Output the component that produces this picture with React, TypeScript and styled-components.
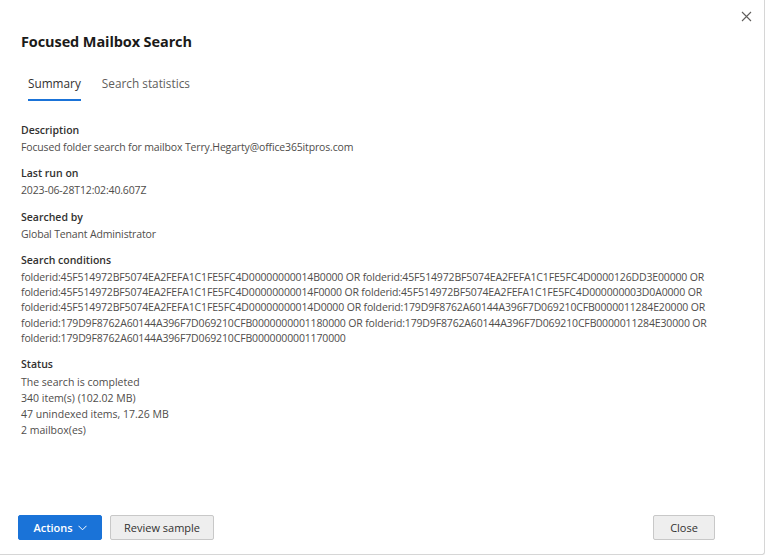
import React from "react";
import styled, { createGlobalStyle } from "styled-components";

const Global = createGlobalStyle`
  html, body { margin: 0; padding: 0; background: #ffffff; }
  body { font-family: "Open Sans", "Noto Sans", sans-serif; }
  * { box-sizing: border-box; }
`;

const Panel = styled.div`
  position: relative;
  width: 765px;
  height: 555px;
  background: #fff;
  border-right: 1px solid #d6d6d6;
  border-bottom: 1px solid #d6d6d6;
  border-bottom-right-radius: 3px;
  display: flex;
  flex-direction: column;
`;

const CloseX = styled.button`
  position: absolute;
  top: 6px;
  right: 8px;
  width: 20px;
  height: 20px;
  border: none;
  background: transparent;
  padding: 0;
  display: flex;
  align-items: center;
  justify-content: center;
  cursor: pointer;
`;

const Title = styled.h1`
  margin: 32px 0 0 21px;
  font-size: 14.5px;
  font-weight: 700;
  color: #1b1a19;
  line-height: 20px;
  letter-spacing: -0.1px;
`;

const TabBar = styled.div`
  display: flex;
  gap: 21px;
  margin: 17px 0 0 28px;
`;

const Tab = styled.div<{ $active?: boolean }>`
  font-size: 11.8px;
  color: ${(p) => (p.$active ? "#323130" : "#605e5c")};
  padding: 6px 0 7px;
  line-height: 17px;
  border-bottom: 2px solid ${(p) => (p.$active ? "#1a73d8" : "transparent")};
`;

const Content = styled.div`
  flex: 1;
  padding: 21px 21px 0;
  display: flex;
  flex-direction: column;
  gap: 10px;
`;

const Section = styled.div`
  display: flex;
  flex-direction: column;
`;

const Label = styled.div`
  font-size: 10.5px;
  font-weight: 600;
  color: #323130;
  line-height: 16px;
  margin-bottom: 2px;
`;

const Value = styled.div`
  font-size: 10.5px;
  color: #4f4d4b;
  line-height: 15.3px;
  letter-spacing: -0.15px;
`;

const StatusLine = styled.div`
  font-size: 10.5px;
  color: #4f4d4b;
  line-height: 16px;
`;

const Footer = styled.div`
  display: flex;
  align-items: center;
  padding: 0 49px 14px 18px;
  gap: 8px;
`;

const Spacer = styled.div`
  flex: 1;
`;

const PrimaryButton = styled.button`
  height: 25px;
  width: 84px;
  background: #1a73d8;
  color: #fff;
  border: 1px solid #1a73d8;
  border-radius: 2px;
  font-family: inherit;
  font-size: 11px;
  font-weight: 600;
  display: flex;
  align-items: center;
  justify-content: center;
  gap: 5px;
  padding: 0;
`;

const SecondaryButton = styled.button<{ $w: number }>`
  height: 25px;
  width: ${(p) => p.$w}px;
  background: #eeeeee;
  color: #323130;
  border: 1px solid #c8c8c8;
  border-radius: 2px;
  font-family: inherit;
  font-size: 11px;
  padding: 0;
`;

const conditions =
  "folderid:45F514972BF5074EA2FEFA1C1FE5FC4D00000000014B0000 OR folderid:45F514972BF5074EA2FEFA1C1FE5FC4D0000126DD3E00000 OR folderid:45F514972BF5074EA2FEFA1C1FE5FC4D00000000014F0000 OR folderid:45F514972BF5074EA2FEFA1C1FE5FC4D000000003D0A0000 OR folderid:45F514972BF5074EA2FEFA1C1FE5FC4D00000000014D0000 OR folderid:179D9F8762A60144A396F7D069210CFB0000011284E20000 OR folderid:179D9F8762A60144A396F7D069210CFB0000000001180000 OR folderid:179D9F8762A60144A396F7D069210CFB0000011284E30000 OR folderid:179D9F8762A60144A396F7D069210CFB0000000001170000";

export default function App() {
  return (
    <>
      <Global />
      <Panel>
        <CloseX aria-label="Close">
          <svg width="11" height="11" viewBox="0 0 11 11">
            <path d="M1 1 L10 10 M10 1 L1 10" stroke="#605e5c" strokeWidth="1.1" fill="none" />
          </svg>
        </CloseX>
        <Title>Focused Mailbox Search</Title>
        <TabBar>
          <Tab $active>Summary</Tab>
          <Tab>Search statistics</Tab>
        </TabBar>
        <Content>
          <Section>
            <Label>Description</Label>
            <Value>Focused folder search for mailbox Terry.Hegarty@office365itpros.com</Value>
          </Section>
          <Section>
            <Label>Last run on</Label>
            <Value>2023-06-28T12:02:40.607Z</Value>
          </Section>
          <Section>
            <Label>Searched by</Label>
            <Value>Global Tenant Administrator</Value>
          </Section>
          <Section>
            <Label>Search conditions</Label>
            <Value>{conditions}</Value>
          </Section>
          <Section>
            <Label>Status</Label>
            <StatusLine>The search is completed</StatusLine>
            <StatusLine>340 item(s) (102.02 MB)</StatusLine>
            <StatusLine>47 unindexed items, 17.26 MB</StatusLine>
            <StatusLine>2 mailbox(es)</StatusLine>
          </Section>
        </Content>
        <Footer>
          <PrimaryButton>
            Actions
            <svg width="9" height="6" viewBox="0 0 9 6">
              <path d="M0.5 0.8 L4.5 4.8 L8.5 0.8" stroke="#fff" strokeWidth="1" fill="none" />
            </svg>
          </PrimaryButton>
          <SecondaryButton $w={104}>Review sample</SecondaryButton>
          <Spacer />
          <SecondaryButton $w={62}>Close</SecondaryButton>
        </Footer>
      </Panel>
    </>
  );
}
